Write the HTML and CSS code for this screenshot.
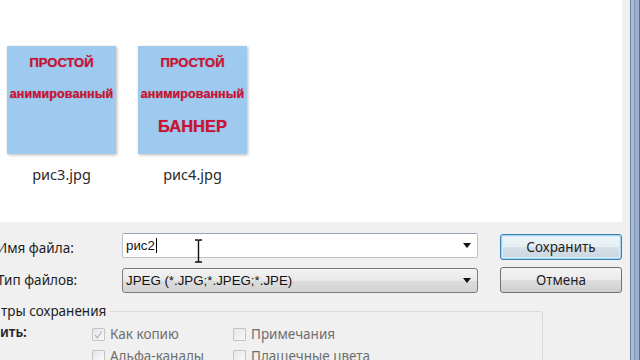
FILE: index.html
```html
<!DOCTYPE html>
<html lang="ru">
<head>
<meta charset="utf-8">
<title>Сохранить как</title>
<link rel="stylesheet" href="styles.css">
</head>
<body>
<div class="window">
  <div class="dialog">
    <div class="browser">
      <div class="files">
        <div class="file">
          <div class="thumb">
            <span class="t1">ПРОСТОЙ</span>
            <span class="t2">анимированный</span>
          </div>
          <div class="caption">рис3.jpg</div>
        </div>
        <div class="file">
          <div class="thumb">
            <span class="t1">ПРОСТОЙ</span>
            <span class="t2">анимированный</span>
            <span class="t3">БАННЕР</span>
          </div>
          <div class="caption">рис4.jpg</div>
        </div>
      </div>
    </div>
    <div class="form">
      <div class="row">
        <div class="label low">Имя файла:</div>
        <div class="field input">
          <span class="value">рис2</span><span class="caret"></span>
          <span class="arrow"></span>
          <svg class="ibeam" width="9" height="24" viewBox="0 0 9 24"><path d="M1 1h2.5c.7 0 1 .5 1 1 0-.5.3-1 1-1H8M4.5 2v20M1 23h2.5c.7 0 1-.5 1-1 0 .5.3 1 1 1H8" fill="none" stroke="#111" stroke-width="1.4"/></svg>
        </div>
        <button class="btn default">Сохранить</button>
      </div>
      <div class="row">
        <div class="label">Тип файлов:</div>
        <div class="field combo">
          <span class="value">JPEG (*.JPG;*.JPEG;*.JPE)</span>
          <span class="arrow"></span>
        </div>
        <button class="btn">Отмена</button>
      </div>
      <fieldset class="group">
        <legend>тры сохранения</legend>
        <div class="opts">
          <div class="glabel">ить:</div>
          <label class="chk"><span class="box checked"><svg width="11" height="11" viewBox="0 0 11 11"><path d="M2 6l2.5 3L9 2" fill="none" stroke="#b9b9b9" stroke-width="1.3"/></svg></span>Как копию</label>
          <label class="chk"><span class="box"></span>Примечания</label>
          <div class="glabel"></div>
          <label class="chk"><span class="box"></span>Альфа-каналы</label>
          <label class="chk"><span class="box"></span>Плашечные цвета</label>
        </div>
      </fieldset>
    </div>
  </div>
  <div class="frame"></div>
</div>
</body>
</html>
```
FILE: styles.css
```css
html, body {
  margin: 0;
  padding: 0;
  width: 640px;
  height: 360px;
  overflow: hidden;
  background: #f0f0f0;
}
.window {
  display: flex;
  width: 640px;
  height: 360px;
  font-family: "Noto Sans", "Open Sans", sans-serif;
  color: #1e1e1e;
}
.dialog {
  width: 630px;
  height: 360px;
  overflow: hidden;
  background: #f0f0f0;
  display: flex;
  flex-direction: column;
}
.frame {
  width: 10px;
  height: 360px;
  background: linear-gradient(90deg, #6b7f9c 0, #6b7f9c 1px, #a9bbd6 1px, #a9bbd6 4px, #7f95b6 4px, #7f95b6 5px, #9db1ce 5px, #9db1ce 9px, #5f708a 9px);
}
.browser {
  width: 622px;
  height: 222px;
  background: #ffffff;
  border-right: 8px solid #eef0f1;
  flex: none;
}
.files {
  display: flex;
  gap: 22px;
  padding: 46px 0 0 7px;
}
.file {
  width: 109px;
  display: flex;
  flex-direction: column;
  align-items: center;
}
.thumb {
  width: 109px;
  height: 108px;
  background: #9ecaf0;
  box-shadow: 1px 1px 3px rgba(0, 0, 0, 0.28);
  display: flex;
  flex-direction: column;
  align-items: center;
  font-family: "Liberation Sans", Arial, sans-serif;
  font-weight: bold;
  color: #cc1132;
  text-shadow: 0 0 1px rgba(150, 0, 20, 0.5);
}
.t1 {
  font-size: 13px;
  line-height: 16px;
  margin-top: 9px;
}
.t2 {
  font-size: 12.5px;
  line-height: 16px;
  margin-top: 15px;
  letter-spacing: 0.1px;
}
.t3 {
  font-size: 16.5px;
  line-height: 18px;
  margin-top: 15px;
}
.caption {
  margin-top: 10px;
  font-size: 14.5px;
  line-height: 20px;
  color: #2a2a2a;
}
.form {
  padding-top: 11px;
  display: flex;
  flex-direction: column;
  gap: 8px;
}
.row {
  display: flex;
  align-items: center;
  height: 26px;
}
.label {
  width: 125px;
  margin-left: -3px;
  font-size: 13.5px;
  color: #1e1e1e;
}
.label.low {
  padding-top: 3px;
}
.field {
  position: relative;
  width: 356px;
  box-sizing: border-box;
  display: flex;
  align-items: center;
  font-family: "Liberation Sans", Arial, sans-serif;
  font-size: 13.3px;
  color: #111;
}
.input {
  height: 25px;
  background: #fff;
  border: 1px solid #b8c3cc;
  border-top-color: #9aa6b2;
  border-radius: 2px;
  padding-left: 3px;
  margin-top: -1px;
}
.combo {
  height: 25px;
  background: linear-gradient(#f3f3f3, #e9e9e9 50%, #dcdcdc 51%, #d4d4d4);
  border: 1px solid #7b7b7b;
  border-radius: 3px;
  padding-left: 3px;
}
.caret {
  width: 1px;
  height: 15px;
  background: #000;
  margin-left: 1px;
}
.arrow {
  margin-left: auto;
  margin-right: 6px;
  width: 0;
  height: 0;
  border-left: 4.5px solid transparent;
  border-right: 4.5px solid transparent;
  border-top: 5px solid #111;
}
.ibeam {
  position: absolute;
  left: 71px;
  top: 5px;
}
.btn {
  margin-left: 22px;
  width: 122px;
  height: 26px;
  box-sizing: border-box;
  border: 1px solid #707070;
  border-radius: 3px;
  background: linear-gradient(#f3f3f3, #ebebeb 50%, #dddddd 51%, #cfcfcf);
  font-family: "Noto Sans", "Open Sans", sans-serif;
  font-size: 13.5px;
  color: #1e1e1e;
  padding: 0;
}
.btn.default {
  margin-top: 2px;
  border-color: #3c7fb1;
  box-shadow: inset 0 0 0 1px #9fd5f3, inset 0 0 0 2px #d6eefb;
  background: linear-gradient(#f0f6fa, #e6eef3 50%, #d5e0e7 51%, #cbd6de);
}
.group {
  margin: 2px 0 0 -14px;
  width: 557px;
  box-sizing: border-box;
  border: 1px solid #d5dbe0;
  border-radius: 3px;
  padding: 4px 0 0 14px;
  min-width: 0;
}
.group legend {
  padding: 0 4px 0 1px;
  margin-left: -1px;
  font-size: 13.5px;
  line-height: 16px;
  color: #1e1e1e;
}
.opts {
  display: grid;
  grid-template-columns: 91px 141px 1fr;
  grid-auto-rows: 22px;
  align-items: center;
}
.glabel {
  font-size: 13.5px;
  font-weight: 600;
  color: #222;
  margin-top: -4px;
  margin-left: -1px;
}
.chk {
  display: flex;
  align-items: center;
  font-size: 13.5px;
  color: #6e6e6e;
}
.box {
  width: 13px;
  height: 13px;
  box-sizing: border-box;
  border: 1px solid #c4c4c4;
  border-radius: 1px;
  background: linear-gradient(135deg, #e6e6e6, #fafafa);
  margin-right: 5px;
  display: flex;
  align-items: center;
  justify-content: center;
}
```
